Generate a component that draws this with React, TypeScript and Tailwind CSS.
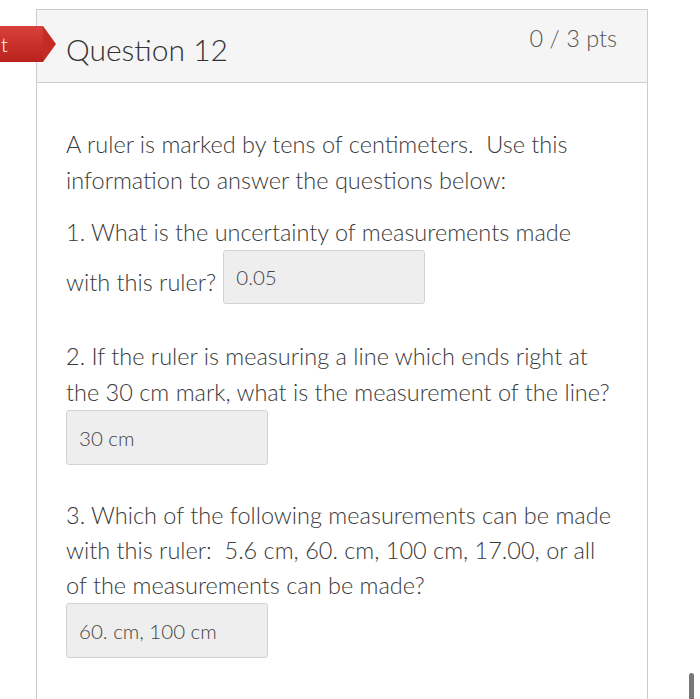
export default function App() {
  return (
    <div className="relative h-[699px] w-[700px] overflow-hidden bg-white font-['Lato',sans-serif] font-light text-[#2d3b45]">
      <div className="ml-[36px] mt-[9px] h-[720px] w-[612px] border border-b-0 border-[#c7cdd1]">
        <div className="flex h-[73px] items-start justify-between border-b border-[#c7cdd1] bg-[#f5f5f5] pl-[29px] pr-[30px]">
          <h2 className="pt-[21px] text-[30px] leading-[36px] font-light text-[#333]">Question 12</h2>
          <span className="pt-[14px] text-[23.5px] leading-[28px] text-[#555]">0 / 3 pts</span>
        </div>
        <div className="pl-[29px] pr-[28px] pt-[43px] text-[23.5px] leading-[36px] text-[#3a3a3a]">
          <p>A ruler is marked by tens of centimeters.&nbsp; Use this information to answer the questions below:</p>
          <p className="mt-[16px]">1. What is the uncertainty of measurements made</p>
          <div className="flex items-start">
            <span className="pt-[14px]">with this ruler?</span>
            <span className="ml-[7px] flex h-[54px] w-[202px] items-center rounded-[3px] border border-[#d2d2d2] bg-[#eeeeee] px-[12px] text-[20.5px] leading-[26px] text-[#444]">0.05</span>
          </div>
          <p className="mt-[34px]">2. If the ruler is measuring a line which ends right at the 30 cm mark, what is the measurement of the line?</p>
          <div className="flex h-[55px] w-[202px] items-center rounded-[3px] border border-[#d2d2d2] bg-[#eeeeee] px-[12px] text-[20.5px] text-[#444]">30 cm</div>
          <p className="mt-[33px] leading-[35px]">3. Which of the following measurements can be made with this ruler:&nbsp; 5.6 cm, 60. cm, 100 cm, 17.00, or all of the measurements can be made?</p>
          <div className="flex h-[55px] w-[202px] items-center rounded-[3px] border border-[#d2d2d2] bg-[#eeeeee] px-[12px] text-[20.5px] text-[#444]">60. cm, 100 cm</div>
        </div>
      </div>
      <div className="absolute left-0 top-[26px] flex h-[36px] items-center">
        <div className="flex h-full w-[43px] items-center bg-gradient-to-b from-[#d8403a] to-[#b9211c] pl-[1px] text-[20px] text-white">t</div>
        <div className="h-0 w-0 border-y-[18px] border-l-[13px] border-y-transparent border-l-[#c62a25]" />
      </div>
      <div className="absolute left-[689px] top-[673px] h-[30px] w-[5px] rounded-full bg-[#777]" />
    </div>
  );
}
